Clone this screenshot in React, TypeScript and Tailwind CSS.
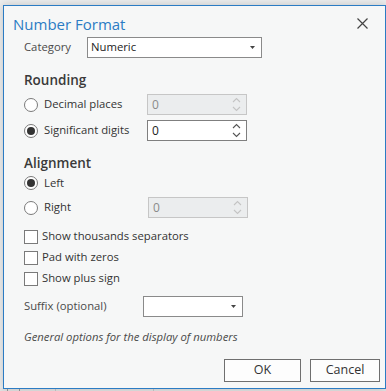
import React from 'react';

const font = { fontFamily: '"Open Sans", "Noto Sans", "Liberation Sans", sans-serif' };

function Radio({ checked }: { checked?: boolean }) {
    return (
        <span className="flex h-[14px] w-[14px] shrink-0 items-center justify-center rounded-full border border-[#7a7a7a] bg-white">
            {checked && <span className="h-[8px] w-[8px] rounded-full bg-[#333]" />}
        </span>
    );
}

function Check() {
    return <span className="h-[14px] w-[14px] shrink-0 border border-[#7a7a7a] bg-white" />;
}

function Spinner({ disabled }: { disabled?: boolean }) {
    const c = disabled ? '#c4c4c4' : '#555';
    return (
        <div
            className={`flex h-[21px] w-[100px] items-center justify-between border pl-[4px] pr-[5px] text-[12px] ${
                disabled ? 'border-[#c6c6c6] bg-[#ebedee] text-[#8a8a8a]' : 'border-[#7f7f7f] bg-white text-[#222]'
            }`}
        >
            <span>0</span>
            <svg width="9" height="17" viewBox="0 0 9 17" fill="none" stroke={c} strokeWidth="1.1">
                <path d="M1 6 L4.5 2.5 L8 6" />
                <path d="M1 11 L4.5 14.5 L8 11" />
            </svg>
        </div>
    );
}

function Dropdown({ width, value }: { width: string; value?: string }) {
    return (
        <div className={`flex h-[21px] ${width} items-center justify-between border border-[#8a8a8a] bg-white pl-[3px] pr-[6px] text-[#222]`}>
            <span>{value}</span>
            <svg width="5" height="3" viewBox="0 0 5 3">
                <path d="M0 0 H5 L2.5 3 Z" fill="#444" />
            </svg>
        </div>
    );
}

export default function App() {
    return (
        <div className="relative h-[391px] w-[386px] overflow-hidden bg-[#eceded]" style={font}>
            {/* table grid behind the dialog */}
            <div className="absolute bottom-0 left-0 h-[3px] w-full bg-[#e3e4e4]" />
            <div className="absolute bottom-0 left-[7px] h-[3px] w-px bg-[#9a9a9a]" />
            <div className="absolute bottom-0 left-[19px] h-[3px] w-px bg-[#9a9a9a]" />
            <div className="absolute bottom-0 left-[55px] h-[3px] w-px bg-[#c8c8c8]" />
            <div className="absolute bottom-0 left-[153px] h-[3px] w-px bg-[#c8c8c8]" />

            <div className="relative ml-[3px] mt-[5px] flex h-[384px] w-[383px] flex-col border border-[#2b7cc4] bg-[#f6f7f7] text-[11.3px] text-[#333] shadow-[0_0_8px_rgba(0,0,0,0.18)]">
                {/* header */}
                <div className="flex h-[31px] items-start justify-between pl-[9px] pr-[17px]">
                    <span className="mt-[8px] text-[15px] leading-[20px] text-[#2b7cc4]">Number Format</span>
                    <svg className="mt-[12px]" width="11" height="11" viewBox="0 0 11 11" stroke="#444" strokeWidth="1.2">
                        <path d="M0.5 0.5 L10.5 10.5 M10.5 0.5 L0.5 10.5" />
                    </svg>
                </div>

                <div className="flex flex-col pl-[20px]">
                    <div className="flex h-[21px] items-center">
                        <span className="w-[63px] text-[#4a4a4a]">Category</span>
                        <Dropdown width="w-[175px]" value="Numeric" />
                    </div>

                    <div className="mt-[11px] flex h-[22px] items-center text-[13.5px] font-semibold text-[#3a3a3a]">Rounding</div>

                    <div className="mt-[3px] flex h-[21px] items-center">
                        <Radio />
                        <span className="ml-[6px] w-[103px]">Decimal places</span>
                        <Spinner disabled />
                    </div>
                    <div className="mt-[5px] flex h-[21px] items-center">
                        <Radio checked />
                        <span className="ml-[6px] w-[103px]">Significant digits</span>
                        <Spinner />
                    </div>

                    <div className="mt-[11px] flex h-[22px] items-center text-[13.5px] font-semibold text-[#3a3a3a]">Alignment</div>

                    <div className="flex h-[18px] items-center">
                        <Radio checked />
                        <span className="ml-[6px]">Left</span>
                    </div>
                    <div className="mt-[5px] flex h-[21px] items-center">
                        <Radio />
                        <span className="ml-[6px] w-[104px]">Right</span>
                        <Spinner disabled />
                    </div>

                    <div className="mt-[8px] flex h-[21px] items-center">
                        <Check />
                        <span className="ml-[4px]">Show thousands separators</span>
                    </div>
                    <div className="flex h-[21px] items-center">
                        <Check />
                        <span className="ml-[4px]">Pad with zeros</span>
                    </div>
                    <div className="flex h-[21px] items-center">
                        <Check />
                        <span className="ml-[4px]">Show plus sign</span>
                    </div>

                    <div className="mt-[7px] flex h-[21px] items-center">
                        <span className="w-[119px] text-[#4a4a4a]">Suffix (optional)</span>
                        <Dropdown width="w-[100px]" />
                    </div>

                    <div className="mt-[9px] flex h-[22px] items-center italic text-[#4a4a4a]">General options for the display of numbers</div>
                </div>

                <div className="mt-[11px] flex h-[23px] justify-end gap-[9px] pr-[5px]">
                    <button className="w-[77px] border border-[#6f6f6f] bg-[#fdfdfd] text-[12.5px] text-[#333]">OK</button>
                    <button className="w-[70px] border border-[#6f6f6f] bg-[#fdfdfd] text-[12.5px] text-[#333]">Cancel</button>
                </div>
            </div>
        </div>
    );
}
